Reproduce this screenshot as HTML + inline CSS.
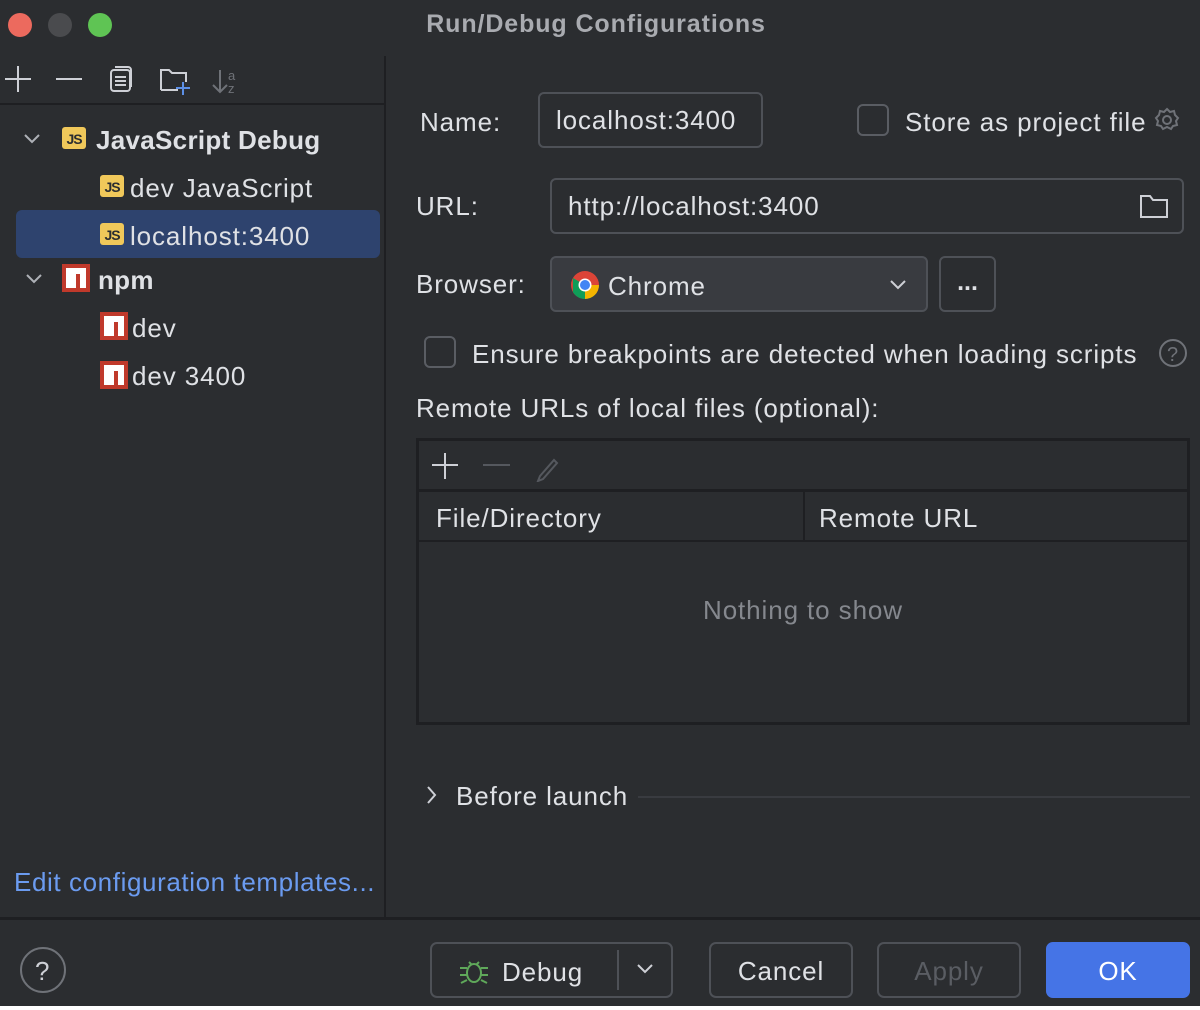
<!DOCTYPE html>
<html><head><meta charset="utf-8"><style>
*{box-sizing:border-box;margin:0;padding:0}
body{width:1200px;height:1010px;background:#fff;font-family:"Liberation Sans",sans-serif;color:#dfe1e5;overflow:hidden;position:relative}
#win{position:absolute;left:0;top:0;width:1200px;height:1006px;background:#2b2d30}
.a{position:absolute;white-space:nowrap}
.t{font-size:26px;letter-spacing:0.9px;margin-top:2px}
.box{position:absolute;border:2px solid #4e5157;border-radius:6px}
.js{position:absolute;width:24px;height:22px;background:#f0c85a;border-radius:3px;color:#2b2d30;font-size:14px;font-weight:bold;text-align:center;line-height:24px;letter-spacing:-1px}
.npm{position:absolute;width:28px;height:28px;background:#c0392b;}
.npm:after{content:"";position:absolute;left:4px;top:4px;width:20px;height:20px;background:#fff}
.npm:before{content:"";position:absolute;left:14px;top:10px;width:4px;height:14px;background:#c0392b;z-index:2}
.chk{position:absolute;width:32px;height:32px;border:2px solid #5a5d63;border-radius:6px}
.btn{position:absolute;border:2px solid #4e5157;border-radius:7px;top:942px;height:56px;font-size:26px;letter-spacing:0.9px;text-align:center;line-height:54px}
</style></head><body><div id="win">
<div class="a" style="left:8px;top:13px;width:24px;height:24px;border-radius:50%;background:#ec6a5e"></div>
<div class="a" style="left:48px;top:13px;width:24px;height:24px;border-radius:50%;background:#4a4b4e"></div>
<div class="a" style="left:88px;top:13px;width:24px;height:24px;border-radius:50%;background:#5fc454"></div>
<div class="a" style="left:0;top:10px;width:1192px;text-align:center;font-size:25px;letter-spacing:0.9px;font-weight:bold;color:#a9abb0">Run/Debug Configurations</div>

<svg class="a" style="left:0;top:60px" width="250" height="40" fill="none" stroke="#ced0d6" stroke-width="2">
<path d="M5 19h26M18 6v26"/><path d="M56 19h26"/>
<rect x="111" y="10" width="19" height="21" rx="3"/><path d="M115 7h13a3 3 0 0 1 3 3v17M115 17h11M115 21h11M115 25h11"/>
<path d="M161 30V10h8l3 3h14v9M178 30h-17"/><path d="M183 22v13M176 28h14" stroke="#5c8fe6"/>
<path d="M220 10v22M213 25l7 7 7-7" stroke="#6f7278"/>
<text x="228" y="20" font-size="13" fill="#6f7278" stroke="none" font-family="Liberation Sans">a</text><text x="228" y="33" font-size="13" fill="#6f7278" stroke="none" font-family="Liberation Sans">z</text>
</svg>
<div class="a" style="left:0;top:103px;width:385px;height:2px;background:#1e1f22"></div>
<div class="a" style="left:384px;top:56px;width:2px;height:862px;background:#1e1f22"></div>

<svg class="a" style="left:22px;top:130px" width="20" height="160" fill="none" stroke="#aeb1b7" stroke-width="2"><path d="M3 5l7 7 7-7"/><path d="M5 145l7 7 7-7"/></svg>
<div class="js" style="left:62px;top:127px">JS</div>
<div class="a t" style="left:96px;top:123px;font-weight:bold;letter-spacing:0.3px">JavaScript Debug</div>
<div class="js" style="left:100px;top:175px">JS</div>
<div class="a t" style="left:130px;top:171px">dev JavaScript</div>
<div class="a" style="left:16px;top:210px;width:364px;height:48px;background:#2e436e;border-radius:6px"></div>
<div class="js" style="left:100px;top:223px">JS</div>
<div class="a t" style="left:130px;top:219px">localhost:3400</div>
<div class="npm" style="left:62px;top:264px"></div>
<div class="a t" style="left:98px;top:263px;font-weight:bold;letter-spacing:0.3px">npm</div>
<div class="npm" style="left:100px;top:312px"></div>
<div class="a t" style="left:132px;top:311px">dev</div>
<div class="npm" style="left:100px;top:361px"></div>
<div class="a t" style="left:132px;top:359px">dev 3400</div>
<div class="a t" style="left:14px;top:865px;color:#6b9bf0;letter-spacing:0.6px">Edit configuration templates...</div>

<div class="a t" style="left:420px;top:105px">Name:</div>
<div class="box" style="left:538px;top:92px;width:225px;height:56px"></div>
<div class="a t" style="left:556px;top:103px">localhost:3400</div>
<div class="chk" style="left:857px;top:104px"></div>
<div class="a t" style="left:905px;top:105px">Store as project file</div>
<svg class="a" style="left:1153px;top:106px" width="30" height="30" fill="none" stroke="#6f7278" stroke-width="2"><circle cx="14" cy="14" r="4"/><path d="M14 3l3 3 4-1 1 4 3 3-2 3 1 4-4 1-2 3-4-2-4 2-2-3-4-1 1-4-2-3 3-3 1-4 4 1z"/></svg>

<div class="a t" style="left:416px;top:189px">URL:</div>
<div class="box" style="left:550px;top:178px;width:634px;height:56px"></div>
<div class="a t" style="left:568px;top:189px">http://localhost:3400</div>
<svg class="a" style="left:1138px;top:192px" width="32" height="28" fill="none" stroke="#ced0d6" stroke-width="2"><path d="M3 25V4h9l3 4h14v17z"/></svg>

<div class="a t" style="left:416px;top:267px">Browser:</div>
<div class="box" style="left:550px;top:256px;width:378px;height:56px;background:#393b40"></div>
<svg class="a" style="left:570px;top:270px" width="30" height="30" viewBox="0 0 30 30"><circle cx="15" cy="15" r="14" fill="#db4437"/><path d="M15 15L27.1 22A14 14 0 0 1 15 29 14 14 0 0 1 2.9 22L2.9 8z" fill="#0f9d58"/><path d="M15 15h14A14 14 0 0 1 15 29z" fill="#f4b400"/><circle cx="15" cy="15" r="6.5" fill="#fff"/><circle cx="15" cy="15" r="5" fill="#4285f4"/></svg>
<div class="a t" style="left:608px;top:269px">Chrome</div>
<svg class="a" style="left:888px;top:278px" width="20" height="14" fill="none" stroke="#ced0d6" stroke-width="2"><path d="M3 3l7 7 7-7"/></svg>
<div class="box" style="left:939px;top:256px;width:57px;height:56px;text-align:center;font-size:25px;line-height:48px;font-weight:bold">...</div>

<div class="chk" style="left:424px;top:336px"></div>
<div class="a t" style="left:472px;top:337px">Ensure breakpoints are detected when loading scripts</div>
<svg class="a" style="left:1158px;top:338px" width="32" height="32" fill="none" stroke="#6f7278" stroke-width="2"><circle cx="15" cy="15" r="13"/><text x="9" y="23" font-size="20" fill="#6f7278" stroke="none" font-family="Liberation Sans">?</text></svg>

<div class="a t" style="left:416px;top:391px">Remote URLs of local files (optional):</div>
<div class="a" style="left:416px;top:438px;width:774px;height:287px;border:3px solid #1e1f22;background:#2b2d30"></div>
<div class="a" style="left:419px;top:489px;width:768px;height:3px;background:#1e1f22"></div>
<div class="a" style="left:419px;top:540px;width:768px;height:2px;background:#1e1f22"></div>
<div class="a" style="left:803px;top:492px;width:2px;height:48px;background:#1e1f22"></div>
<svg class="a" style="left:428px;top:450px" width="140" height="32" fill="none" stroke-width="2"><path d="M4 15h26M17 3v26" stroke="#ced0d6"/><path d="M55 15h27" stroke="#55585e"/><path d="M112 26l-2 5 5-2 14-16-3-3z" stroke="#55585e"/></svg>
<div class="a t" style="left:436px;top:501px">File/Directory</div>
<div class="a t" style="left:819px;top:501px">Remote URL</div>
<div class="a t" style="left:420px;top:593px;width:766px;text-align:center;color:#85888e">Nothing to show</div>

<svg class="a" style="left:424px;top:784px" width="16" height="22" fill="none" stroke="#ced0d6" stroke-width="2"><path d="M4 3l7 8-7 8"/></svg>
<div class="a t" style="left:456px;top:779px">Before launch</div>
<div class="a" style="left:638px;top:796px;width:552px;height:2px;background:#393b40"></div>

<div class="a" style="left:0;top:917px;width:1200px;height:3px;background:#1e1f22"></div>
<svg class="a" style="left:20px;top:946px" width="48" height="48" fill="none" stroke="#6f7278" stroke-width="2"><circle cx="23" cy="24" r="22"/><text x="15" y="34" font-size="26" fill="#ced0d6" stroke="none" font-family="Liberation Sans">?</text></svg>
<div class="btn" style="left:430px;width:243px"></div>
<svg class="a" style="left:458px;top:956px" width="32" height="30" fill="none" stroke="#5fa85a" stroke-width="2"><ellipse cx="16" cy="17" rx="7" ry="9"/><path d="M11 6l3 3M21 6l-3 3M2 12h7M23 12h7M2 19h7M23 19h7M3 27l6-3M29 27l-6-3"/></svg>
<div class="a t" style="left:502px;top:955px">Debug</div>
<div class="a" style="left:617px;top:950px;width:2px;height:40px;background:#4e5157"></div>
<svg class="a" style="left:635px;top:962px" width="20" height="14" fill="none" stroke="#ced0d6" stroke-width="2"><path d="M3 3l7 7 7-7"/></svg>
<div class="btn" style="left:709px;width:144px">Cancel</div>
<div class="btn" style="left:877px;width:144px;color:#5a5d63">Apply</div>
<div class="btn" style="left:1046px;width:144px;background:#4574e6;border-color:#4574e6;color:#fff">OK</div>
</div></body></html>
